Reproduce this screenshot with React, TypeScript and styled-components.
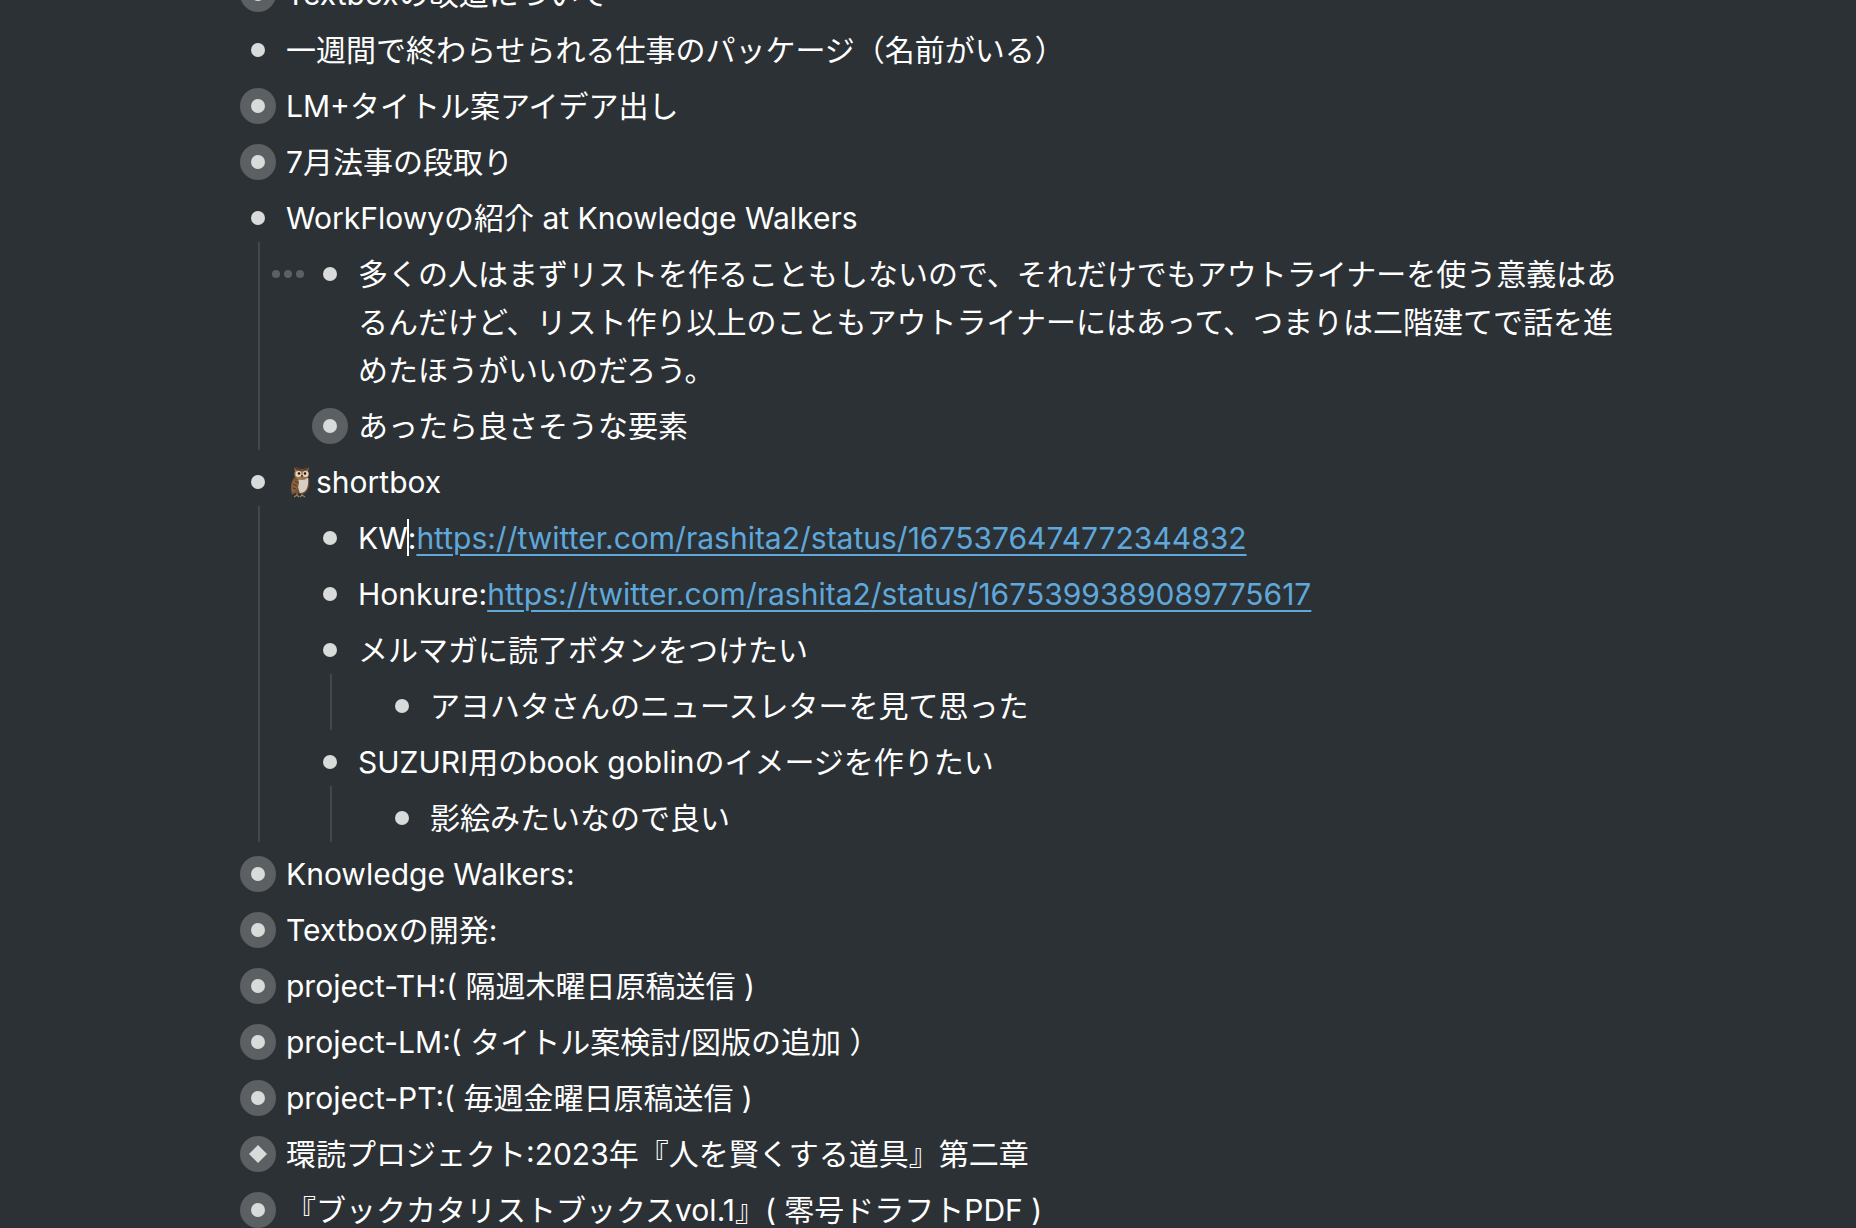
import React from "react";
import styled, { createGlobalStyle } from "styled-components";

const colors = {
  page: "#2c3135",
  text: "#ffffff",
  dot: "#d9dbdb",
  ring: "#5c6062",
  guide: "#43484b",
  link: "#5fa8dc",
};

const GlobalStyle = createGlobalStyle`
  *, *::before, *::after { box-sizing: border-box; }
  body {
    margin: 0;
    background: ${colors.page};
    color: ${colors.text};
    font-family: Inter, "Noto Sans CJK JP", sans-serif;
    font-size: 30px;
    font-weight: 400;
    line-height: 48px;
    text-spacing-trim: space-all;
  }
`;

const Viewport = styled.main`
  height: 100vh;
  overflow: hidden;
`;

const Page = styled.div`
  max-width: 1392px;
  margin: -38px auto 0;
  padding-left: 8px;
`;

const List = styled.ul`
  list-style: none;
  margin: 0;
  padding: 0;
`;

const Children = styled(List)`
  margin-left: 18px;
  padding-left: 52px;
  border-left: 2px solid ${colors.guide};
`;

const Item = styled.li`
  padding-top: 8px;
`;

const Row = styled.div`
  position: relative;
  display: flex;
  align-items: flex-start;
  gap: 10px;
`;

const Bullet = styled.a<{ $collapsed: boolean }>`
  flex: none;
  display: flex;
  align-items: center;
  justify-content: center;
  width: 36px;
  height: 36px;
  margin: 6px 0;
  border-radius: 50%;
  background: ${(p) => (p.$collapsed ? colors.ring : "transparent")};
`;

const Dot = styled.span`
  width: 14px;
  height: 14px;
  border-radius: 50%;
  background: ${colors.dot};
`;

const Diamond = styled.svg`
  width: 18px;
  height: 18px;
  fill: ${colors.dot};
`;

const MenuButton = styled.button`
  position: absolute;
  right: 100%;
  top: 0;
  display: flex;
  align-items: center;
  gap: 4px;
  height: 48px;
  margin-right: 8px;
  padding: 0;
  border: 0;
  background: none;
`;

const MenuDot = styled.span`
  width: 8px;
  height: 8px;
  border-radius: 50%;
  background: ${colors.ring};
`;

const Content = styled.div`
  flex: 1;
  min-width: 0;
`;

const Link = styled.a`
  color: ${colors.link};
  text-decoration: underline;
  text-decoration-thickness: 2px;
  text-underline-offset: 5px;
`;

const Caret = styled.span`
  display: inline-block;
  width: 2px;
  height: 37px;
  margin: 0 -1px;
  vertical-align: -7px;
  background: ${colors.text};
`;

const OwlDrawing = styled.svg`
  display: inline-block;
  width: 30px;
  height: 32px;
  vertical-align: -5px;
`;

const Owl = () => (
  <OwlDrawing viewBox="0 0 30 32" role="img" aria-label="owl">
    <path d="M11 27v3M8 31l3-2 2 2M16 27v3M14 31l2-2 3 2" stroke="#9a8466" strokeWidth="1.2" fill="none" />
    <path d="M9 11c-4 4-5 10-3 18 2-2 5-2 9-1 6 0 9-6 8-16z" fill="#78502f" />
    <path d="M13 12c-2 5-1 11 1 15 6 0 9-6 8-15z" fill="#d6cdc3" />
    <path d="M8 13c-3 4-3 9-2 14 4-1 7-5 7-12z" fill="#87603c" />
    <path d="M7 18l4 2M7 22l3 1M9 15l3 2" stroke="#513520" strokeWidth="1" />
    <path d="M8 2c3 1 5 1 8 1 3 0 5 0 7-1l-1 3c2 4 0 9-6 9-7 0-9-5-7-9z" fill="#9a7454" />
    <path d="M8 1c4 0 6 1 8 3 2-2 4-3 7-3l-2 3-5 1-6-1z" fill="#5b3d2a" />
    <circle cx="12.500" cy="8" r="3" fill="#ead7b9" />
    <circle cx="19.500" cy="8" r="3" fill="#ead7b9" />
    <circle cx="13" cy="7.500" r="1.300" fill="#21150f" />
    <circle cx="19" cy="7.500" r="1.300" fill="#21150f" />
    <path d="M15 9h2l-1 3z" fill="#3d3028" />
  </OwlDrawing>
);

type Node = {
  id: string;
  content: React.ReactNode;
  collapsed?: boolean;
  diamond?: boolean;
  menu?: boolean;
  children?: Node[];
};

const Url = ({ href }: { href: string }) => <Link href={href}>{href}</Link>;

const outline: Node[] = [
  { id: "textbox-mod", collapsed: true, content: "Textboxの改造について" },
  { id: "package", content: "一週間で終わらせられる仕事のパッケージ（名前がいる）" },
  { id: "lm-title", collapsed: true, content: "LM+タイトル案アイデア出し" },
  { id: "july", collapsed: true, content: "7月法事の段取り" },
  {
    id: "workflowy",
    content: "WorkFlowyの紹介 at Knowledge Walkers",
    children: [
      {
        id: "two-floors",
        menu: true,
        content:
          "多くの人はまずリストを作ることもしないので、それだけでもアウトライナーを使う意義はあるんだけど、リスト作り以上のこともアウトライナーにはあって、つまりは二階建てで話を進めたほうがいいのだろう。",
      },
      { id: "elements", collapsed: true, content: "あったら良さそうな要素" },
    ],
  },
  {
    id: "shortbox",
    content: (
      <>
        <Owl />
        shortbox
      </>
    ),
    children: [
      {
        id: "kw",
        content: (
          <>
            KW
            <Caret />:
            <Url href="https://twitter.com/rashita2/status/1675376474772344832" />
          </>
        ),
      },
      {
        id: "honkure",
        content: (
          <>
            Honkure:
            <Url href="https://twitter.com/rashita2/status/1675399389089775617" />
          </>
        ),
      },
      {
        id: "mail",
        content: "メルマガに読了ボタンをつけたい",
        children: [{ id: "ayohata", content: "アヨハタさんのニュースレターを見て思った" }],
      },
      {
        id: "suzuri",
        content: "SUZURI用のbook goblinのイメージを作りたい",
        children: [{ id: "shadow", content: "影絵みたいなので良い" }],
      },
    ],
  },
  { id: "walkers", collapsed: true, content: "Knowledge Walkers:" },
  { id: "textbox-dev", collapsed: true, content: "Textboxの開発:" },
  { id: "project-th", collapsed: true, content: "project-TH:( 隔週木曜日原稿送信 )" },
  { id: "project-lm", collapsed: true, content: "project-LM:( タイトル案検討/図版の追加 ）" },
  { id: "project-pt", collapsed: true, content: "project-PT:( 毎週金曜日原稿送信 )" },
  { id: "reading", collapsed: true, diamond: true, content: "環読プロジェクト:2023年『人を賢くする道具』第二章" },
  { id: "catalyst", collapsed: true, content: "『ブックカタリストブックスvol.1』( 零号ドラフトPDF )" },
];

const OutlineItem = ({ node }: { node: Node }) => (
  <Item>
    <Row>
      {node.menu && (
        <MenuButton type="button" aria-label="Item menu">
          <MenuDot />
          <MenuDot />
          <MenuDot />
        </MenuButton>
      )}
      <Bullet href={`#${node.id}`} $collapsed={!!node.collapsed} aria-label="Zoom in">
        {node.diamond ? (
          <Diamond viewBox="0 0 18 18">
            <path d="M9 0l9 9-9 9-9-9z" />
          </Diamond>
        ) : (
          <Dot />
        )}
      </Bullet>
      <Content>{node.content}</Content>
    </Row>
    {node.children && (
      <Children>
        {node.children.map((child) => (
          <OutlineItem key={child.id} node={child} />
        ))}
      </Children>
    )}
  </Item>
);

export default function App() {
  return (
    <Viewport>
      <GlobalStyle />
      <Page>
        <List>
          {outline.map((node) => (
            <OutlineItem key={node.id} node={node} />
          ))}
        </List>
      </Page>
    </Viewport>
  );
}
